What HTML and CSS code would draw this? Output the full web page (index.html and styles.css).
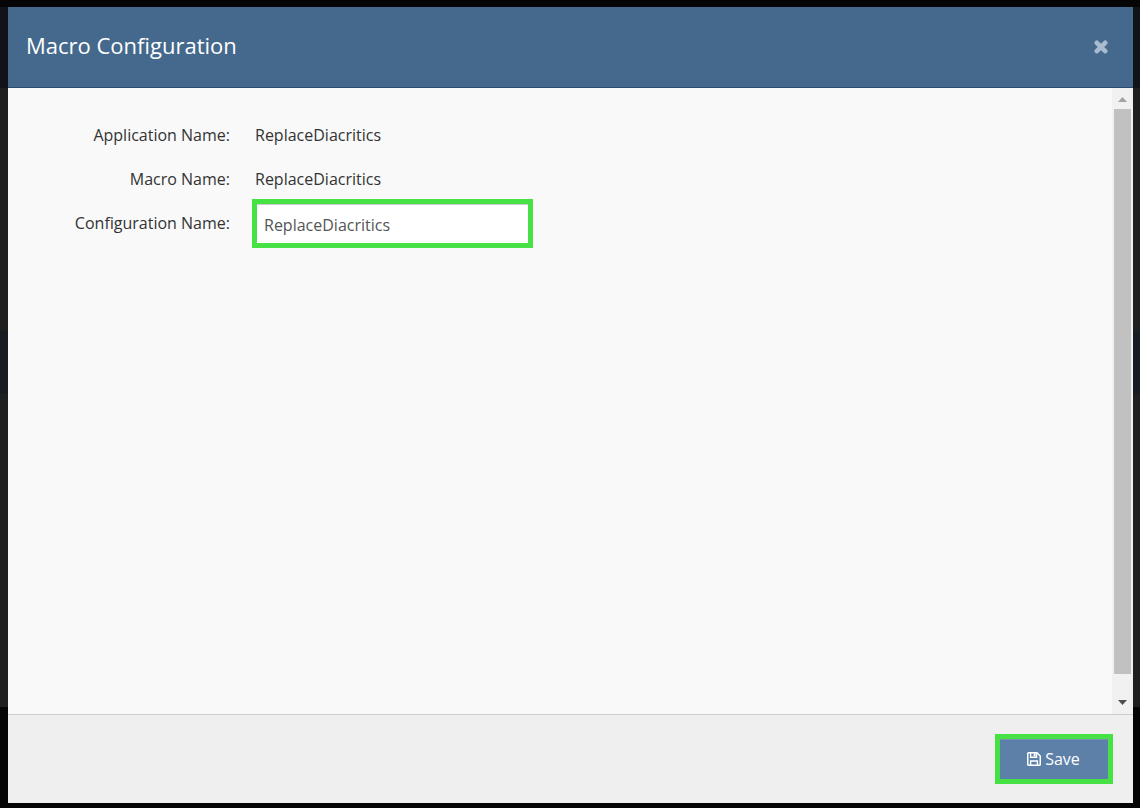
FILE: index.html
```html
<!DOCTYPE html>
<html lang="en">
<head>
<meta charset="utf-8">
<title>Macro Configuration</title>
<link rel="stylesheet" href="styles.css">
</head>
<body>
<form class="modal" role="dialog" aria-labelledby="modal-title">
  <header class="modal-header">
    <h1 class="modal-title" id="modal-title">Macro Configuration</h1>
    <button class="close" type="button" aria-label="Close">
      <svg viewBox="0 0 14 14" width="14" height="14" aria-hidden="true"><path d="M2.8 2.8l8.4 8.4M11.2 2.8l-8.4 8.4" stroke="currentColor" stroke-width="4.6" stroke-linecap="round" fill="none"/></svg>
    </button>
  </header>
  <div class="modal-body">
    <div class="fields">
      <div class="field">
        <span class="label">Application Name:</span>
        <span class="value">ReplaceDiacritics</span>
      </div>
      <div class="field">
        <span class="label">Macro Name:</span>
        <span class="value">ReplaceDiacritics</span>
      </div>
      <div class="field">
        <label class="label" for="config-name">Configuration Name:</label>
        <div class="highlight"><input class="text-input" id="config-name" type="text" value="ReplaceDiacritics"></div>
      </div>
    </div>
    <div class="scrollbar" aria-hidden="true">
      <svg class="arrow arrow-up" viewBox="0 0 9 5" width="9" height="5"><path d="M0 5L4.5 0L9 5z"/></svg>
      <div class="track"><div class="thumb"></div></div>
      <svg class="arrow arrow-down" viewBox="0 0 9 5" width="9" height="5"><path d="M0 0h9L4.5 5z"/></svg>
    </div>
  </div>
  <footer class="modal-footer">
    <div class="highlight">
      <button class="save" type="submit">
        <svg viewBox="0 0 14 14" width="14" height="14" aria-hidden="true"><path d="M.75 1.6Q.75.75 1.6.75H10L13.25 4v8.4q0 .85-.85.85H1.6q-.85 0-.85-.85z" fill="none" stroke="currentColor" stroke-width="1.5"/><path d="M3.6 1v4.2h6V1M3.6 13V9h6.8v4" fill="none" stroke="currentColor" stroke-width="1.4"/><path d="M6.6 1.2h2v3.2h-2z" fill="currentColor"/></svg>
        Save
      </button>
    </div>
  </footer>
</form>
</body>
</html>
```
FILE: styles.css
```css
* {
  box-sizing: border-box;
}

body {
  margin: 0;
  min-height: 100vh;
  padding: 7px 7px 5px 8px;
  display: flex;
  font: 16px/24px "Open Sans", sans-serif;
  color: #333;
  background: linear-gradient(
    #050505 7px,
    #101317 7px, #101317 88px,
    #1e1f20 88px, #1e1f20 331px,
    #171c22 331px, #171c22 394px,
    #1e1f20 394px, #1e1f20 707px,
    #050505 707px);
}

.modal {
  flex: 1;
  display: flex;
  flex-direction: column;
  background: #f9f9f9;
}

.modal-header {
  display: flex;
  align-items: center;
  justify-content: space-between;
  height: 81px;
  padding: 0 25px 4px 18px;
  background: #44698d;
  border-bottom: 1px solid #2b4c6d;
}

.modal-title {
  margin: 0;
  font-size: 22px;
  line-height: 32px;
  font-weight: 400;
  color: #fff;
}

.close {
  display: flex;
  padding: 4px 0 0;
  border: 0;
  background: none;
  color: #a9bbcf;
}

.modal-body {
  flex: 1;
  display: flex;
}

.fields {
  flex: 1;
  padding-top: 35px;
}

.field {
  display: flex;
  align-items: flex-start;
  gap: 22px;
  min-height: 44px;
}

.label {
  width: 222px;
  text-align: right;
}

.value {
  padding-left: 3px;
}

.field .highlight {
  width: 281px;
  margin-top: -12px;
}

.highlight {
  border: 5px solid #45e145;
}

.text-input {
  display: block;
  width: 100%;
  height: 39px;
  padding: 2px 7px 0;
  border: 0;
  border-top: 1px solid #ccc;
  outline: 0;
  font: inherit;
  color: #555;
  background: #fff;
}

.scrollbar {
  width: 21px;
  display: flex;
  flex-direction: column;
  align-items: center;
  padding: 9px 0;
  background: #f1f1f1;
}

.arrow-up {
  fill: #a3a3a3;
}

.arrow-down {
  fill: #505050;
}

.track {
  flex: 1;
  width: 17px;
  padding: 7px 0 26px;
}

.thumb {
  height: 100%;
  background: #c1c1c1;
}

.modal-footer {
  display: flex;
  justify-content: flex-end;
  padding: 19px 20px;
  background: #efefef;
  border-top: 1px solid #ccc;
}

.save {
  display: flex;
  align-items: center;
  justify-content: center;
  gap: 4px;
  width: 108px;
  height: 40px;
  padding: 0 1px 2px 0;
  border: 0;
  border-top: 1px solid #7890b4;
  font: inherit;
  color: #fff;
  background: #5d80a8;
}
```
